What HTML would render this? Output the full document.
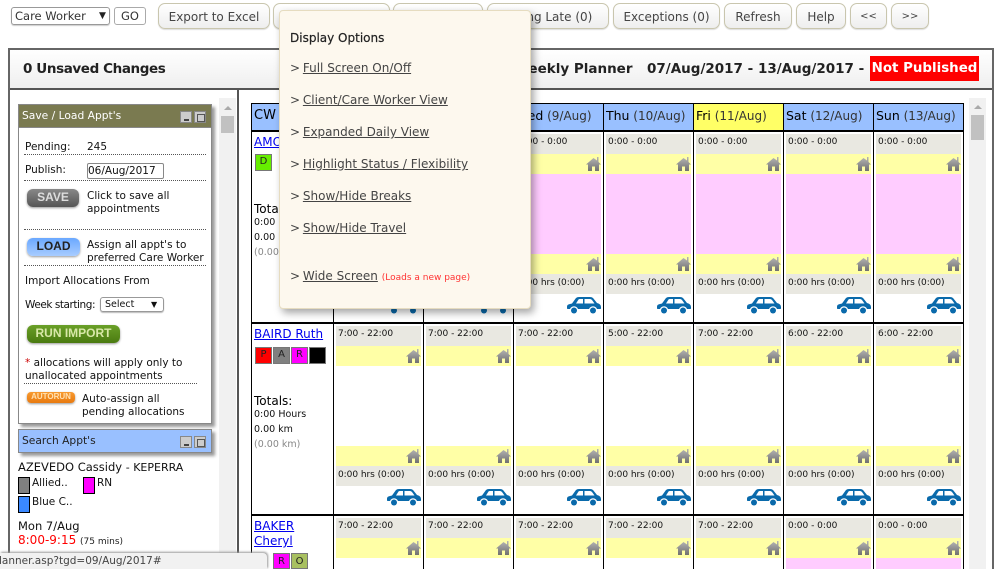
<!DOCTYPE html>
<html><head><meta charset="utf-8"><style>
html,body{margin:0;padding:0;width:995px;height:569px;overflow:hidden;background:#fff}
body{position:relative;font-family:"DejaVu Sans","Liberation Sans",sans-serif;font-size:10.5px;color:#111}
.a{position:absolute;white-space:nowrap}
.btn{position:absolute;top:3px;height:24px;line-height:26px;text-align:center;border:1px solid #c9c6ae;border-radius:7px;background:linear-gradient(#fff,#eee);color:#444;font-size:12px;box-shadow:0 1px 1px #ddd;box-sizing:content-box}
.hd{position:absolute;top:104px;height:26px;line-height:23px;background:#99c0ff;border-right:1px solid #000;padding-left:2px;box-sizing:border-box;font-size:12px;color:#333;width:90px}
.hd b{font-weight:normal;color:#000;font-size:12.5px}
.cell{position:absolute;width:85px;height:186px}
.r3{height:51px;overflow:hidden}
.cell div{position:absolute;left:0;width:85px;height:20px}
.g{background:#e9e8e1;font-size:9px;line-height:16px;padding-left:2px;box-sizing:border-box}
.g.t{font-size:9px;line-height:18px;letter-spacing:-.05px;color:#111}
.y{background:#ffffa6}
.p{background:#ffccff}
.h{position:absolute;right:0;top:2px;width:15px;height:15px}
.car{position:absolute;right:0;top:3px;width:34px;height:18px}
.vl{position:absolute;width:1px;background:#000;top:103px;height:466px}
.hl{position:absolute;left:251px;width:713px;height:2px;background:#000}
.sq{position:absolute;width:15px;height:15px;border:1px solid #777;font-size:10px;line-height:14px;text-align:center;color:#222}
u{text-decoration:underline}
.m{position:absolute;left:290px;font-size:12px;color:#444;white-space:nowrap}
.m u{color:#444;margin-left:-1px}
.dot{position:absolute;left:24px;height:0;border-top:1px dotted #555}
.min{position:absolute;width:12px;height:12px;background:#ccc;border:1px solid #888;box-sizing:border-box}
.sb{position:absolute;width:17px;background:#f1f1f1}
.gb{position:absolute;border-radius:6px;text-align:center;font-size:11px;font-family:"Liberation Sans",sans-serif;box-shadow:0 1px 2px #999}
.small{font-size:9.500px}
</style></head><body>
<svg width="0" height="0" style="position:absolute"><defs>
<linearGradient id="hg" x1="0" y1="0" x2="0" y2="1"><stop offset="0" stop-color="#b5b5b5"/><stop offset="1" stop-color="#707070"/></linearGradient>
<symbol id="house" viewBox="0 0 15 15"><path d="M7.500 2L0 8.500h2V15h4v-4.500h3V15h4V8.500h2L12.500 6V1h-1.500v3.500z" fill="url(#hg)"/></symbol>
<symbol id="carr" viewBox="0 0 34 18"><path d="M0 11.500V9.500Q0 7.500 3 7L5 6.500L9 1Q10 0 12 0H23Q25 0 26 1L30 6Q34 7 34 10V11.500Q34 12 33 12H1Q0 12 0 11.500z" fill="#0a6aab"/><path d="M9 6.500L11.500 2.500Q12 2 13 2H16V6.500zM17.500 2H23Q24 2 25 3L27.500 6.500H17.500z" fill="#fff"/><circle cx="7" cy="13.500" r="4.300" fill="#fff"/><circle cx="7" cy="13.500" r="3" fill="#0a6aab"/><circle cx="26" cy="13.500" r="4.300" fill="#fff"/><circle cx="26" cy="13.500" r="3" fill="#0a6aab"/></symbol>
</defs></svg>

<div class="a" style="left:11px;top:7px;width:99px;height:18px;border:1px solid #999;border-radius:3px;box-sizing:border-box;font-size:11.500px;line-height:17px;padding-left:3px;color:#333;box-shadow:0 1px 1px #ccc">Care Worker<span class="a" style="left:87px;top:0;font-size:9px;color:#222">▼</span></div>
<div class="a" style="left:114px;top:7px;width:32px;height:18px;border:1px solid #aaa;border-radius:3px;box-sizing:border-box;font-size:11.500px;line-height:17px;text-align:center;color:#333">GO</div>
<div class="btn" style="left:158px;width:110px">Export to Excel</div>
<div class="btn" style="left:273px;width:115px"></div>
<div class="btn" style="left:393px;width:88px"></div>
<div class="btn" style="left:487px;width:120px;text-align:left;text-indent:35px">ing Late (0)</div>
<div class="btn" style="left:613px;width:105px">Exceptions (0)</div>
<div class="btn" style="left:724px;width:66px">Refresh</div>
<div class="btn" style="left:796px;width:48px">Help</div>
<div class="btn" style="left:850px;width:35px;font-size:10px">&lt;&lt;</div>
<div class="btn" style="left:891px;width:36px;font-size:10px">&gt;&gt;</div>

<div class="a" style="left:8px;top:48px;width:986px;height:521px;border:2px solid #666;border-bottom:0;box-sizing:border-box"></div>
<div class="a" style="left:10px;top:50px;width:982px;height:38px;background:linear-gradient(#fff,#efefef)"></div>
<div class="a" style="left:10px;top:88px;width:982px;height:2px;background:#555"></div>
<div class="a" style="left:237px;top:89px;width:2px;height:480px;background:#555"></div>
<div class="a" style="left:23px;top:60px;font-size:13.500px;font-weight:bold;line-height:18px;letter-spacing:-.4px;color:#222">0 Unsaved Changes</div>
<div class="a" style="left:514px;top:60px;font-size:13.500px;font-weight:bold;line-height:18px;color:#222">Weekly Planner</div>
<div class="a" style="left:647px;top:60px;font-size:13.500px;font-weight:bold;line-height:18px;color:#222">07/Aug/2017 - 13/Aug/2017 -</div>
<div class="a" style="left:870px;top:56px;width:109px;height:25px;background:#f00;color:#fff;font-size:13.400px;font-weight:bold;line-height:26px;text-align:center">Not Published</div>

<div class="sb" style="left:219px;top:98px;height:471px"></div>
<div class="a" style="left:221px;top:116px;width:13px;height:17px;background:#c1c1c1"></div>
<div class="a" style="left:224px;top:106px;border:4px solid transparent;border-bottom:4px solid #aaa;border-top:0"></div>
<div class="sb" style="left:969px;top:98px;height:471px"></div>
<div class="a" style="left:971px;top:115px;width:13px;height:25px;background:#c1c1c1"></div>
<div class="a" style="left:974px;top:105px;border:4px solid transparent;border-bottom:4px solid #aaa;border-top:0"></div>

<!-- Save/Load panel -->
<div class="a" style="left:18px;top:104px;width:194px;height:320px;border:1px solid #888;box-sizing:border-box;background:#fff;box-shadow:3px 3px 3px #999"></div>
<div class="a" style="left:18px;top:104px;width:194px;height:24px;background:#7a7a50;border:1px solid #888;box-sizing:border-box;color:#fff;font-size:10.700px;line-height:22px;padding-left:3px">Save / Load Appt's</div>
<div class="min" style="left:180px;top:111px"><span class="a" style="left:3px;top:7px;width:5px;height:2px;background:#444"></span></div>
<div class="min" style="left:194px;top:111px"><span class="a" style="left:2px;top:2px;width:6px;height:6px;border:1px solid #555"></span></div>
<div class="a" style="left:25px;top:141px">Pending:</div><div class="a" style="left:87px;top:141px">245</div>
<div class="dot" style="top:154px;width:182px"></div>
<div class="a" style="left:25px;top:164px">Publish:</div>
<div class="a" style="left:87px;top:163px;width:77px;height:16px;border:1px solid #888;border-radius:2px;box-sizing:border-box;line-height:15px;font-size:10.500px">06/Aug/2017</div>
<div class="dot" style="top:180px;width:182px"></div>
<div class="gb" style="left:27px;top:189px;width:52px;height:18px;line-height:16px;background:linear-gradient(#888,#555);color:#ddd;font-size:12px;font-weight:bold">SAVE</div>
<div class="a" style="left:87px;top:190px;line-height:13px">Click to save all<br>appointments</div>
<div class="dot" style="top:229px;width:182px"></div>
<div class="gb" style="left:27px;top:238px;width:53px;height:18px;line-height:16px;background:linear-gradient(#6aa8ff,#a8ccff);color:#222;font-size:12px;font-weight:bold">LOAD</div>
<div class="a" style="left:87px;top:239px;line-height:13px">Assign all appt's to<br>preferred Care Worker</div>
<div class="dot" style="top:265px;width:182px"></div>
<div class="a" style="left:25px;top:275px">Import Allocations From</div>
<div class="a" style="left:25px;top:299px;letter-spacing:-.45px">Week starting:</div>
<div class="a" style="left:100px;top:297px;width:64px;height:15px;border:1px solid #999;border-radius:3px;box-sizing:border-box;font-size:9.500px;line-height:14px;padding-left:4px;box-shadow:0 1px 1px #bbb">Select<span class="a" style="left:50px;top:0;font-size:8px">▼</span></div>
<div class="gb" style="left:27px;top:325px;width:93px;height:18px;line-height:17px;background:linear-gradient(#6aa028,#4a7a10);color:#d8e8a8;font-size:12px;font-weight:bold">RUN IMPORT</div>
<div class="a" style="left:25px;top:357px;line-height:13px"><span style="color:#c00">*</span> allocations will apply only to<br>unallocated appointments</div>
<div class="dot" style="top:383px;width:173px"></div>
<div class="gb" style="left:27px;top:392px;width:48px;height:11px;line-height:10px;background:linear-gradient(#f89a30,#e87a10);color:#ffe0b0;font-size:8px;font-weight:bold;border-radius:4px">AUTORUN</div>
<div class="a" style="left:82px;top:393px;line-height:13px">Auto-assign all<br>pending allocations</div>

<!-- search -->
<div class="a" style="left:18px;top:429px;width:194px;height:24px;background:#99c0ff;border:1px solid #888;box-sizing:border-box;font-size:10.700px;line-height:22px;padding-left:3px;color:#222;box-shadow:3px 3px 3px #999">Search Appt's</div>
<div class="min" style="left:180px;top:436px"><span class="a" style="left:3px;top:7px;width:5px;height:2px;background:#444"></span></div>
<div class="min" style="left:194px;top:436px"><span class="a" style="left:2px;top:2px;width:6px;height:6px;border:1px solid #555"></span></div>
<div class="a" style="left:18px;top:460px;font-size:11.500px;line-height:15px;color:#111">AZEVEDO Cassidy <span style="font-size:11px">- KEPERRA</span></div>
<div class="a" style="left:18px;top:477px;width:10px;height:15px;background:#808080;border:1px solid #000"></div>
<div class="a" style="left:32px;top:477px">Allied..</div>
<div class="a" style="left:83px;top:477px;width:10px;height:15px;background:#f0f;border:1px solid #000"></div>
<div class="a" style="left:97px;top:477px">RN</div>
<div class="a" style="left:18px;top:496px;width:10px;height:15px;background:#3a88ff;border:1px solid #000"></div>
<div class="a" style="left:32px;top:496px">Blue C..</div>
<div class="a" style="left:18px;top:519px;font-size:11.500px">Mon 7/Aug</div>
<div class="a" style="left:18px;top:533px;font-size:12px;color:#f00">8:00-9:15 <span style="font-size:9px;color:#222">(75 mins)</span></div>

<!-- table -->
<div class="a" style="left:251px;top:103px;width:713px;height:1px;background:#000"></div>
<div class="hd" style="left:252px;width:82px"><b style="font-size:13px">CW</b></div>
<div class="hd" style="left:334px"></div>
<div class="hd" style="left:424px"></div>
<div class="hd" style="left:514px"><b>Wed</b> (9/Aug)</div>
<div class="hd" style="left:604px"><b>Thu</b> (10/Aug)</div>
<div class="hd" style="left:694px;background:#ffff66"><b>Fri</b> (11/Aug)</div>
<div class="hd" style="left:784px"><b>Sat</b> (12/Aug)</div>
<div class="hd" style="left:874px"><b>Sun</b> (13/Aug)</div>
<div class="a" style="left:251px;top:130px;width:713px;height:2px;background:#000"></div>
<div class="hl" style="top:322px"></div>
<div class="hl" style="top:514px"></div>
<div class="vl" style="left:251px"></div><div class="vl" style="left:333px"></div><div class="vl" style="left:423px"></div><div class="vl" style="left:513px"></div><div class="vl" style="left:603px"></div><div class="vl" style="left:693px"></div><div class="vl" style="left:783px"></div><div class="vl" style="left:873px"></div><div class="vl" style="left:963px"></div>

<!-- CW col -->
<div class="a" style="left:254px;top:135px;font-size:12px;color:#00e;text-decoration:underline">AMOS</div>
<div class="sq" style="left:255px;top:154px;background:#66ee00">D</div>
<div class="a" style="left:254px;top:202px;font-size:12px;color:#000">Totals:</div>
<div class="a small" style="left:254px;top:217px">0:00 Hours</div>
<div class="a small" style="left:254px;top:232px">0.00 km</div>
<div class="a small" style="left:254px;top:247px;color:#888">(0.00 km)</div>

<div class="a" style="left:254px;top:327px;font-size:12px;color:#00e;text-decoration:underline">BAIRD Ruth</div>
<div class="sq" style="left:255px;top:347px;background:#f00">P</div>
<div class="sq" style="left:273px;top:347px;background:#808080">A</div>
<div class="sq" style="left:291px;top:347px;background:#f0f">R</div>
<div class="sq" style="left:309px;top:347px;background:#000"></div>
<div class="a" style="left:254px;top:394px;font-size:12px;color:#000">Totals:</div>
<div class="a small" style="left:254px;top:409px">0:00 Hours</div>
<div class="a small" style="left:254px;top:424px">0.00 km</div>
<div class="a small" style="left:254px;top:439px;color:#888">(0.00 km)</div>

<div class="a" style="left:254px;top:519px;font-size:12px;line-height:15px;color:#00e;text-decoration:underline">BAKER<br>Cheryl</div>
<div class="a" style="left:273px;top:553px;width:17px;height:16px;overflow:hidden;background:#f0f;border:1px solid #777;box-sizing:border-box;font-size:10px;line-height:15px;text-align:center;color:#222">R</div>
<div class="a" style="left:291px;top:553px;width:17px;height:16px;overflow:hidden;background:#a8c060;border:1px solid #777;box-sizing:border-box;font-size:10px;line-height:15px;text-align:center;color:#222">O</div>

<!-- Row 1 -->
<div class="cell" style="left:336px;top:134px"><div style="top:160px;height:26px"><svg class="car"><use href="#carr"/></svg></div></div>
<div class="cell" style="left:426px;top:134px"><div style="top:160px;height:26px"><svg class="car"><use href="#carr"/></svg></div></div>
<div class="cell" style="left:516px;top:134px"><div class="g" style="top:0">0:00 - 0:00</div><div class="y" style="top:20px"><svg class="h"><use href="#house"/></svg></div><div class="p" style="top:40px;height:80px"></div><div class="y" style="top:120px"><svg class="h"><use href="#house"/></svg></div><div class="g t" style="top:140px">0:00 hrs (0:00)</div><div style="top:160px;height:26px"><svg class="car"><use href="#carr"/></svg></div></div>
<div class="cell" style="left:606px;top:134px"><div class="g" style="top:0">0:00 - 0:00</div><div class="y" style="top:20px"><svg class="h"><use href="#house"/></svg></div><div class="p" style="top:40px;height:80px"></div><div class="y" style="top:120px"><svg class="h"><use href="#house"/></svg></div><div class="g t" style="top:140px">0:00 hrs (0:00)</div><div style="top:160px;height:26px"><svg class="car"><use href="#carr"/></svg></div></div>
<div class="cell" style="left:696px;top:134px"><div class="g" style="top:0">0:00 - 0:00</div><div class="y" style="top:20px"><svg class="h"><use href="#house"/></svg></div><div class="p" style="top:40px;height:80px"></div><div class="y" style="top:120px"><svg class="h"><use href="#house"/></svg></div><div class="g t" style="top:140px">0:00 hrs (0:00)</div><div style="top:160px;height:26px"><svg class="car"><use href="#carr"/></svg></div></div>
<div class="cell" style="left:786px;top:134px"><div class="g" style="top:0">0:00 - 0:00</div><div class="y" style="top:20px"><svg class="h"><use href="#house"/></svg></div><div class="p" style="top:40px;height:80px"></div><div class="y" style="top:120px"><svg class="h"><use href="#house"/></svg></div><div class="g t" style="top:140px">0:00 hrs (0:00)</div><div style="top:160px;height:26px"><svg class="car"><use href="#carr"/></svg></div></div>
<div class="cell" style="left:876px;top:134px"><div class="g" style="top:0">0:00 - 0:00</div><div class="y" style="top:20px"><svg class="h"><use href="#house"/></svg></div><div class="p" style="top:40px;height:80px"></div><div class="y" style="top:120px"><svg class="h"><use href="#house"/></svg></div><div class="g t" style="top:140px">0:00 hrs (0:00)</div><div style="top:160px;height:26px"><svg class="car"><use href="#carr"/></svg></div></div>

<!-- Row 2 -->
<div class="cell" style="left:336px;top:326px"><div class="g" style="top:0">7:00 - 22:00</div><div class="y" style="top:20px"><svg class="h"><use href="#house"/></svg></div><div class="y" style="top:120px"><svg class="h"><use href="#house"/></svg></div><div class="g t" style="top:140px">0:00 hrs (0:00)</div><div style="top:160px;height:26px"><svg class="car"><use href="#carr"/></svg></div></div>
<div class="cell" style="left:426px;top:326px"><div class="g" style="top:0">7:00 - 22:00</div><div class="y" style="top:20px"><svg class="h"><use href="#house"/></svg></div><div class="y" style="top:120px"><svg class="h"><use href="#house"/></svg></div><div class="g t" style="top:140px">0:00 hrs (0:00)</div><div style="top:160px;height:26px"><svg class="car"><use href="#carr"/></svg></div></div>
<div class="cell" style="left:516px;top:326px"><div class="g" style="top:0">7:00 - 22:00</div><div class="y" style="top:20px"><svg class="h"><use href="#house"/></svg></div><div class="y" style="top:120px"><svg class="h"><use href="#house"/></svg></div><div class="g t" style="top:140px">0:00 hrs (0:00)</div><div style="top:160px;height:26px"><svg class="car"><use href="#carr"/></svg></div></div>
<div class="cell" style="left:606px;top:326px"><div class="g" style="top:0">5:00 - 22:00</div><div class="y" style="top:20px"><svg class="h"><use href="#house"/></svg></div><div class="y" style="top:120px"><svg class="h"><use href="#house"/></svg></div><div class="g t" style="top:140px">0:00 hrs (0:00)</div><div style="top:160px;height:26px"><svg class="car"><use href="#carr"/></svg></div></div>
<div class="cell" style="left:696px;top:326px"><div class="g" style="top:0">7:00 - 22:00</div><div class="y" style="top:20px"><svg class="h"><use href="#house"/></svg></div><div class="y" style="top:120px"><svg class="h"><use href="#house"/></svg></div><div class="g t" style="top:140px">0:00 hrs (0:00)</div><div style="top:160px;height:26px"><svg class="car"><use href="#carr"/></svg></div></div>
<div class="cell" style="left:786px;top:326px"><div class="g" style="top:0">6:00 - 22:00</div><div class="y" style="top:20px"><svg class="h"><use href="#house"/></svg></div><div class="y" style="top:120px"><svg class="h"><use href="#house"/></svg></div><div class="g t" style="top:140px">0:00 hrs (0:00)</div><div style="top:160px;height:26px"><svg class="car"><use href="#carr"/></svg></div></div>
<div class="cell" style="left:876px;top:326px"><div class="g" style="top:0">6:00 - 22:00</div><div class="y" style="top:20px"><svg class="h"><use href="#house"/></svg></div><div class="y" style="top:120px"><svg class="h"><use href="#house"/></svg></div><div class="g t" style="top:140px">0:00 hrs (0:00)</div><div style="top:160px;height:26px"><svg class="car"><use href="#carr"/></svg></div></div>

<!-- Row 3 -->
<div class="cell r3" style="left:336px;top:518px"><div class="g" style="top:0">7:00 - 22:00</div><div class="y" style="top:20px"><svg class="h"><use href="#house"/></svg></div></div>
<div class="cell r3" style="left:426px;top:518px"><div class="g" style="top:0">7:00 - 22:00</div><div class="y" style="top:20px"><svg class="h"><use href="#house"/></svg></div></div>
<div class="cell r3" style="left:516px;top:518px"><div class="g" style="top:0">7:00 - 22:00</div><div class="y" style="top:20px"><svg class="h"><use href="#house"/></svg></div></div>
<div class="cell r3" style="left:606px;top:518px"><div class="g" style="top:0">7:00 - 22:00</div><div class="y" style="top:20px"><svg class="h"><use href="#house"/></svg></div></div>
<div class="cell r3" style="left:696px;top:518px"><div class="g" style="top:0">7:00 - 22:00</div><div class="y" style="top:20px"><svg class="h"><use href="#house"/></svg></div></div>
<div class="cell r3" style="left:786px;top:518px"><div class="g" style="top:0">0:00 - 0:00</div><div class="y" style="top:20px"><svg class="h"><use href="#house"/></svg></div><div class="p" style="top:40px;height:11px"></div></div>
<div class="cell r3" style="left:876px;top:518px"><div class="g" style="top:0">0:00 - 0:00</div><div class="y" style="top:20px"><svg class="h"><use href="#house"/></svg></div><div class="p" style="top:40px;height:11px"></div></div>

<!-- Status bar -->
<div class="a" style="left:0;top:553px;width:267px;height:16px;background:#f1f1f1;border-top-right-radius:4px;box-shadow:1px -1px 2px #999;font-size:10.500px;line-height:17px;color:#444;overflow:hidden"><span class="a" style="left:-1px;top:0">lanner.asp?tgd=09/Aug/2017#</span></div>

<!-- Popup -->
<div class="a" style="left:279px;top:10px;width:252px;height:299px;background:#fdf8ee;border:1px solid #e6dcc0;border-radius:4px;box-sizing:border-box;box-shadow:3px 4px 8px rgba(0,0,0,.35)"></div>
<div class="m" style="top:31px;color:#222;-webkit-text-stroke:.2px #222">Display Options</div>
<div class="m" style="top:61px">&gt; <u>Full Screen On/Off</u></div>
<div class="m" style="top:93px">&gt; <u>Client/Care Worker View</u></div>
<div class="m" style="top:125px">&gt; <u>Expanded Daily View</u></div>
<div class="m" style="top:157px">&gt; <u>Highlight Status / Flexibility</u></div>
<div class="m" style="top:189px">&gt; <u>Show/Hide Breaks</u></div>
<div class="m" style="top:221px">&gt; <u>Show/Hide Travel</u></div>
<div class="m" style="top:269px">&gt; <u>Wide Screen</u> <span style="font-size:9px;color:#f33">(Loads a new page)</span></div>
</body></html>
